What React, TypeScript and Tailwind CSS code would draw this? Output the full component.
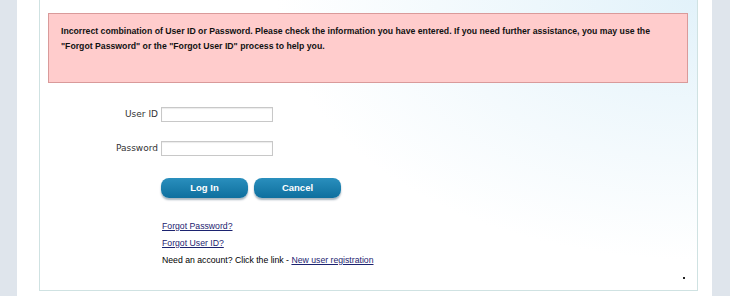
import React from 'react';

// Login page with an error banner
const App: React.FC = () => {
  return (
    <div className="flex h-[296px] w-[730px] overflow-hidden bg-white">
      <div className="w-[17px] shrink-0 bg-[#dfe5ec]" />
      <div className="flex w-[695px] shrink-0 pl-[22px] pr-[14px]">
        <div className="relative h-[291px] w-[659px] border-x border-b border-[#cfe2e2] bg-[radial-gradient(ellipse_420px_260px_at_100%_0%,#e2f2fa,#ffffff)]">
          {/* Error Message */}
          <div className="ml-[8px] mt-[13px] h-[70px] w-[640px] border border-[#d99a9a] bg-[#ffcccc] px-[12px] pt-[10px] font-['Liberation_Sans',Arial,sans-serif] text-[8.7px] font-bold leading-[15px] text-[#111]">
            Incorrect combination of User ID or Password. Please check the information you have entered. If you need further assistance, you may use the
            <br />
            "Forgot Password" or the "Forgot User ID" process to help you.
          </div>

          {/* Login Form */}
          <div className="mt-[24px] font-['DejaVu_Sans',Verdana,sans-serif] text-[9px] text-[#333]">
            <div className="flex items-center">
              <label className="w-[121px] pr-[3px] text-right">User ID</label>
              <input className="h-[15px] w-[112px] border border-[#c8c8c8] bg-white shadow-[inset_0_1px_1px_rgba(0,0,0,0.08)]" />
            </div>
            <div className="mt-[19px] flex items-center">
              <label className="w-[121px] pr-[3px] text-right">Password</label>
              <input type="password" className="h-[15px] w-[112px] border border-[#c8c8c8] bg-white shadow-[inset_0_1px_1px_rgba(0,0,0,0.08)]" />
            </div>
          </div>

          <div className="ml-[121px] mt-[22px] flex gap-[6px] font-['Liberation_Sans',Arial,sans-serif] text-[9.5px] font-bold text-white">
            <button className="h-[20px] w-[87px] rounded-[8px] bg-[linear-gradient(#2a8fbd,#0e6f9e)] shadow-[0_2px_2px_rgba(0,40,70,0.35)]">
              Log In
            </button>
            <button className="h-[20px] w-[87px] rounded-[8px] bg-[linear-gradient(#2a8fbd,#0e6f9e)] shadow-[0_2px_2px_rgba(0,40,70,0.35)]">
              Cancel
            </button>
          </div>

          <div className="ml-[122px] mt-[22px] flex flex-col gap-[5px] font-['Liberation_Sans',Arial,sans-serif] text-[8.7px] leading-[12px] text-black">
            <a href="#" className="self-start text-[#1c2370] underline">Forgot Password?</a>
            <a href="#" className="self-start text-[#1c2370] underline">Forgot User ID?</a>
            <p>
              Need an account? Click the link - <a href="#" className="text-[#1c2370] underline">New user registration</a>
            </p>
          </div>

          <span className="absolute left-[643px] top-[277px] h-[2px] w-[2px] bg-[#222]" />
        </div>
      </div>
      <div className="w-[18px] shrink-0 bg-[#dfe5ec]" />
    </div>
  );
};

export default App;
